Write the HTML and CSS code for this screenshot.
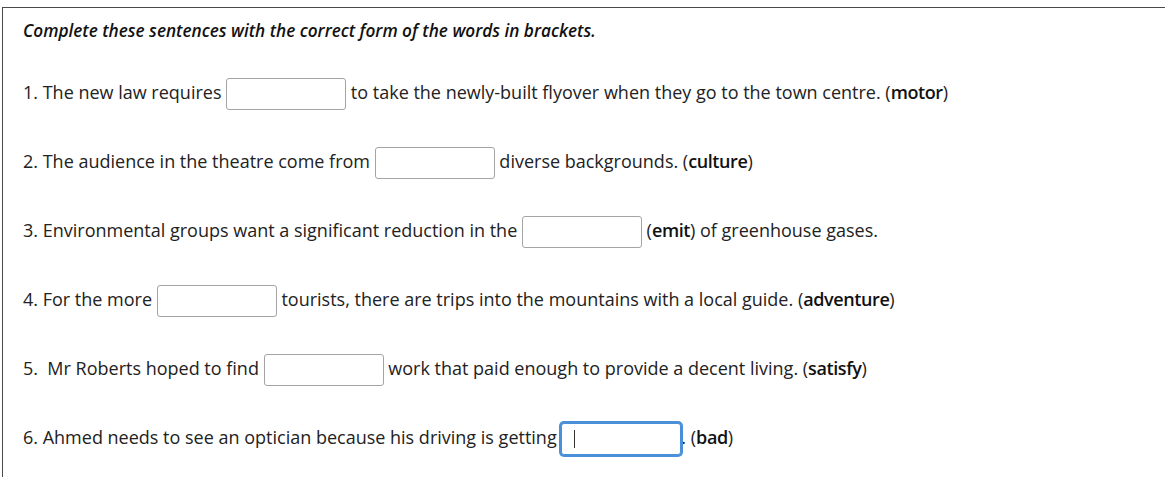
FILE: index.html
```html
<!DOCTYPE html>
<html lang="en">
<head>
<meta charset="utf-8">
<title>Exercise</title>
<link rel="stylesheet" href="styles.css">
</head>
<body>
<div class="panel">
  <p class="title">Complete these sentences with the correct form of the words in brackets.</p>
  <div class="items">
    <p class="item">1. The new law requires <input class="gap" type="text"> to take the newly-built flyover when they go to the town centre. (<b>motor</b>)</p>
    <p class="item">2. The audience in the theatre come from <input class="gap" type="text"> diverse backgrounds. (<b>culture</b>)</p>
    <p class="item">3. Environmental groups want a significant reduction in the <input class="gap" type="text"> (<b>emit</b>) of greenhouse gases.</p>
    <p class="item">4. For the more <input class="gap" type="text"> tourists, there are trips into the mountains with a local guide. (<b>adventure</b>)</p>
    <p class="item">5.&nbsp; Mr Roberts hoped to find <input class="gap" type="text"> work that paid enough to provide a decent living. (<b>satisfy</b>)</p>
    <p class="item">6. Ahmed needs to see an optician because his driving is getting <span class="focus-wrap"><input class="gap focused" type="text"><span class="caret"></span></span>. (<b>bad</b>)</p>
  </div>
</div>
</body>
</html>
```

FILE: styles.css
```css
html, body {
  margin: 0;
  padding: 0;
  background: #ffffff;
  overflow: hidden;
}

body {
  font-family: "Open Sans", "Liberation Sans", sans-serif;
  font-size: 18px;
  color: #222222;
}

.panel {
  margin: 7px 0 0 2px;
  border-top: 1px solid #4a4a4a;
  border-left: 1px solid #4a4a4a;
  padding: 11px 0 0 20px;
  min-height: 480px;
}

.title {
  margin: 0;
  font-size: 17.2px;
  line-height: 24px;
  font-style: italic;
  font-weight: 600;
  color: #111111;
}

.items {
  display: flex;
  flex-direction: column;
  gap: 37px;
  margin-top: 33px;
}

.item {
  margin: 0;
  line-height: 32px;
  height: 32px;
  white-space: nowrap;
}

.item b {
  font-weight: 600;
  letter-spacing: -0.4px;
  color: #111111;
}

.gap {
  box-sizing: border-box;
  width: 120px;
  height: 32px;
  margin: 0;
  padding: 0 12px;
  border: 1px solid #a3a3a8;
  border-radius: 3px;
  background: #ffffff;
  font: inherit;
  vertical-align: middle;
  outline: none;
}

.focus-wrap {
  position: relative;
  display: inline-block;
  vertical-align: middle;
  height: 32px;
}

.gap.focused {
  display: block;
  border-color: #4a90d9;
  box-shadow: 0 0 0 2px #4a90d9;
  border-radius: 3px;
}

.caret {
  position: absolute;
  left: 13px;
  top: 7px;
  width: 1px;
  height: 18px;
  background: #333333;
}
```
